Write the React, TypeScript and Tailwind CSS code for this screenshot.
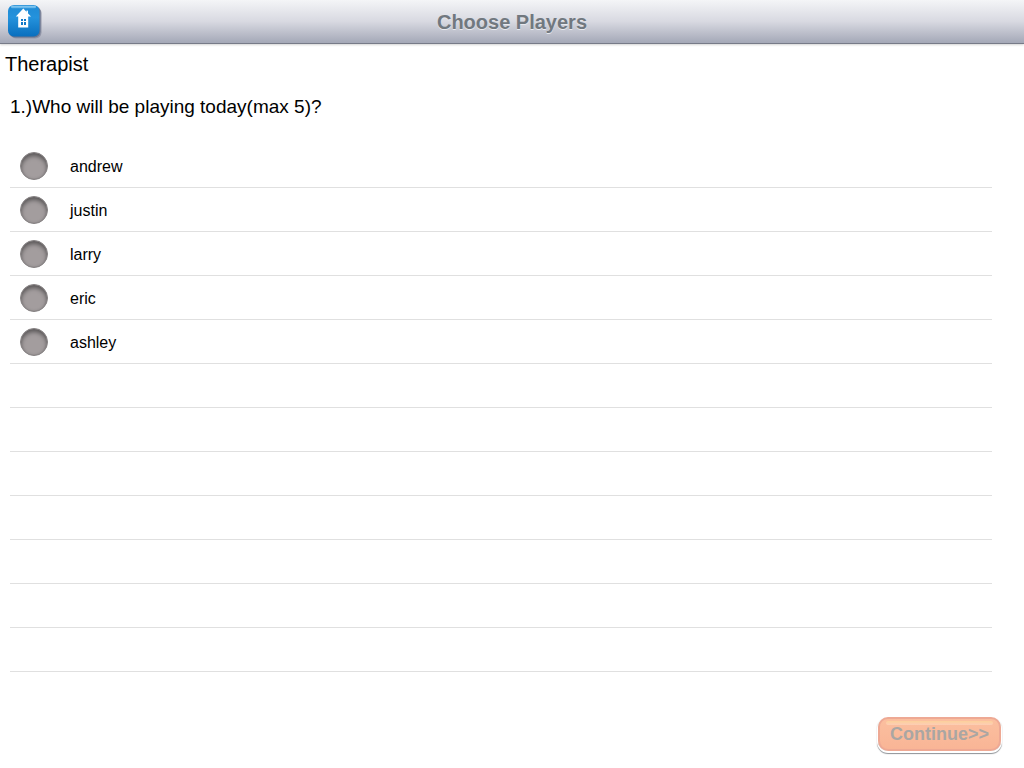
import { useState } from 'react';

const PLAYERS = ['andrew', 'justin', 'larry', 'eric', 'ashley'];
const MAX_PLAYERS = 5;
const EMPTY_ROWS = 7;

function HomeIcon() {
  return (
    <svg width="34" height="34" viewBox="0 0 34 34" aria-hidden="true">
      <defs>
        <linearGradient id="homeFill" x1="0" y1="0" x2="0" y2="1">
          <stop offset="0" stopColor="#1f8ad4" />
          <stop offset="0.4" stopColor="#2492dc" />
          <stop offset="1" stopColor="#0a6fbe" />
        </linearGradient>
        <linearGradient id="homeGloss" x1="0" y1="0" x2="0" y2="1">
          <stop offset="0" stopColor="#8fcdf2" />
          <stop offset="1" stopColor="#55aee6" />
        </linearGradient>
      </defs>
      <rect x="2" y="2" width="31.5" height="31.5" rx="6" fill="#9296a8" />
      <rect x="1" y="1" width="31.5" height="31.5" rx="6" fill="#68748f" />
      <rect x="0" y="0" width="31.5" height="31.5" rx="6" fill="url(#homeFill)" />
      <rect x="3" y="0.7" width="25" height="2.6" rx="1.3" fill="url(#homeGloss)" />
      <path d="M15.3 3.6 L23 11.4 H20.2 V22.4 H10.2 V11.4 H7.8 Z" fill="#fff" />
      <rect x="18.4" y="5.6" width="1.6" height="4" fill="#fff" />
      <path d="M13 14h2v2h-2z M16 14h2v2h-2z M13 17h2v3h-2z M16 17h2v3h-2z" fill="#1279c9" />
    </svg>
  );
}

export default function App() {
  const [selected, setSelected] = useState<string[]>([]);

  const toggle = (name: string) => {
    if (selected.includes(name)) {
      setSelected(selected.filter(p => p !== name));
    } else if (selected.length < MAX_PLAYERS) {
      setSelected([...selected, name]);
    }
  };

  return (
    <div className="min-h-screen flex flex-col bg-white text-black font-['Liberation_Sans',Arial,sans-serif]">
      {/* Header */}
      <header className="grid grid-cols-[1fr_auto_1fr] items-center h-11 px-2 border-b border-[#777b88] bg-linear-to-b from-[#f4f5f7] via-[#d8d9e1] to-[#a4a8b7] shadow-[0_1px_2px_#d4d4d4]">
        <button type="button" aria-label="Home" className="justify-self-start">
          <HomeIcon />
        </button>
        <h1 className="text-xl leading-6 font-bold text-[#71787f] [text-shadow:0_1px_0_#e8e9ee]">
          Choose Players
        </h1>
      </header>

      <main className="flex-1 flex flex-col">
        <h2 className="pt-2 px-[5px] text-xl leading-6">Therapist</h2>
        <p className="pt-[19px] px-2.5 text-[19px] leading-6">1.)Who will be playing today(max 5)?</p>

        {/* Players */}
        <ul className="mt-[25px] ml-2.5 mr-8">
          {PLAYERS.map(name => (
            <li key={name} className="h-11 border-b border-[#e0e0e0]">
              <label className="flex items-center h-full pl-2.5 gap-[22px]">
                <input
                  type="checkbox"
                  checked={selected.includes(name)}
                  onChange={() => toggle(name)}
                  className="appearance-none w-7 h-7 rounded-full border border-[#858182] bg-[#a39d9e] checked:bg-[#4caf50] shadow-[inset_0_3px_4px_#5c595a,inset_0_0_2px_#8a8687]"
                />
                <span className="pt-0.5 text-base leading-5">{name}</span>
              </label>
            </li>
          ))}
          {Array.from({ length: EMPTY_ROWS }, (_, i) => (
            <li key={i} className="h-11 border-b border-[#e0e0e0]" />
          ))}
        </ul>
      </main>

      {/* Footer */}
      <footer className="flex justify-end px-[23px] pb-[17px]">
        <button
          type="button"
          disabled={selected.length === 0}
          className="relative h-[34px] px-2.5 rounded-[10px] border-2 border-[#eea994] bg-linear-to-b from-[#fbbf9f] to-[#f9b596] text-lg leading-6 font-bold text-[#aaa6a3] shadow-[0_1px_0_1px_#fff,0_2px_1px_1px_#8e9296]"
        >
          <span className="absolute inset-x-1.5 top-0.5 h-1 rounded-full bg-linear-to-b from-[#fcd09b] to-[#fdcdb5]" />
          <span className="relative">Continue&gt;&gt;</span>
        </button>
      </footer>
    </div>
  );
}
